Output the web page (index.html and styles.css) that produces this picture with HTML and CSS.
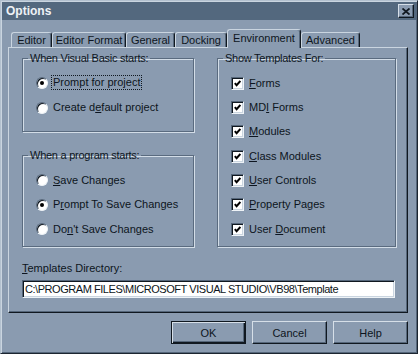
FILE: index.html
```html
<!DOCTYPE html>
<html lang="en">
<head>
<meta charset="utf-8">
<title>Options</title>
<link rel="stylesheet" href="styles.css">
</head>
<body>
<div class="window">
  <div class="titlebar">
    <span class="title">Options</span>
    <button class="close" aria-label="Close">
      <svg width="8" height="7" viewBox="0 0 8 7"><path d="M0.5 0.5 L7.5 6.5 M7.5 0.5 L0.5 6.5" stroke="#101820" stroke-width="1.8" fill="none"/></svg>
    </button>
  </div>
  <div class="client">
    <div class="tabs">
      <div class="tab t-editor">Editor</div>
      <div class="tab t-format">Editor Format</div>
      <div class="tab t-general">General</div>
      <div class="tab t-docking">Docking</div>
      <div class="tab t-env sel">Environment</div>
      <div class="tab t-adv">Advanced</div>
    </div>
    <div class="panel">
      <div class="groups">
        <div class="col">
          <fieldset class="grp g1">
            <legend>When Visual Basic starts:</legend>
            <div class="rows">
              <div class="opt"><span class="radio on"></span><span class="lbl focus">Prompt for pro<u>j</u>ect</span></div>
              <div class="opt"><span class="radio"></span><span class="lbl">Create d<u>e</u>fault project</span></div>
            </div>
          </fieldset>
          <fieldset class="grp g2">
            <legend>When a program starts:</legend>
            <div class="rows">
              <div class="opt"><span class="radio"></span><span class="lbl"><u>S</u>ave Changes</span></div>
              <div class="opt"><span class="radio on"></span><span class="lbl">P<u>r</u>ompt To Save Changes</span></div>
              <div class="opt"><span class="radio"></span><span class="lbl">Do<u>n</u>'t Save Changes</span></div>
            </div>
          </fieldset>
        </div>
        <fieldset class="grp g3">
          <legend>Show Templates For:</legend>
          <div class="rows">
            <div class="opt"><span class="check"><svg width="7" height="7" viewBox="0 0 7 7"><polyline points="0.8,3.2 2.6,5.2 6.4,1" fill="none" stroke="#000" stroke-width="2"/></svg></span><span class="lbl"><u>F</u>orms</span></div>
            <div class="opt"><span class="check"><svg width="7" height="7" viewBox="0 0 7 7"><polyline points="0.8,3.2 2.6,5.2 6.4,1" fill="none" stroke="#000" stroke-width="2"/></svg></span><span class="lbl">MD<u>I</u> Forms</span></div>
            <div class="opt"><span class="check"><svg width="7" height="7" viewBox="0 0 7 7"><polyline points="0.8,3.2 2.6,5.2 6.4,1" fill="none" stroke="#000" stroke-width="2"/></svg></span><span class="lbl"><u>M</u>odules</span></div>
            <div class="opt"><span class="check"><svg width="7" height="7" viewBox="0 0 7 7"><polyline points="0.8,3.2 2.6,5.2 6.4,1" fill="none" stroke="#000" stroke-width="2"/></svg></span><span class="lbl"><u>C</u>lass Modules</span></div>
            <div class="opt"><span class="check"><svg width="7" height="7" viewBox="0 0 7 7"><polyline points="0.8,3.2 2.6,5.2 6.4,1" fill="none" stroke="#000" stroke-width="2"/></svg></span><span class="lbl"><u>U</u>ser Controls</span></div>
            <div class="opt"><span class="check"><svg width="7" height="7" viewBox="0 0 7 7"><polyline points="0.8,3.2 2.6,5.2 6.4,1" fill="none" stroke="#000" stroke-width="2"/></svg></span><span class="lbl"><u>P</u>roperty Pages</span></div>
            <div class="opt"><span class="check"><svg width="7" height="7" viewBox="0 0 7 7"><polyline points="0.8,3.2 2.6,5.2 6.4,1" fill="none" stroke="#000" stroke-width="2"/></svg></span><span class="lbl">User <u>D</u>ocument</span></div>
          </div>
        </fieldset>
      </div>
      <div class="dirlabel"><u>T</u>emplates Directory:</div>
      <div class="textbox">C:\PROGRAM FILES\MICROSOFT VISUAL STUDIO\VB98\Template</div>
    </div>
    <div class="buttons">
      <button class="btn default">OK</button>
      <button class="btn">Cancel</button>
      <button class="btn">Help</button>
    </div>
  </div>
</div>
</body>
</html>
```
FILE: styles.css
```css
* { box-sizing: border-box; }
html, body { margin: 0; padding: 0; }
body {
  width: 418px;
  height: 354px;
  overflow: hidden;
  background: #8a9bb0;
  font-family: "Liberation Sans", Arial, sans-serif;
  font-size: 11px;
  color: #0d1520;
}
u { text-decoration: underline; text-underline-offset: 1px; }

.window {
  width: 418px;
  height: 354px;
  border: 1px solid;
  border-color: #b3c1cf #1c2530 #1c2530 #b3c1cf;
  box-shadow: inset 1px 1px 0 #cad5e0, inset -1px -1px 0 #55667a;
  padding: 1px;
  display: flex;
  flex-direction: column;
}

.titlebar {
  height: 18px;
  background: #53687e;
  display: flex;
  align-items: center;
  justify-content: space-between;
  padding: 0 2px 0 4px;
}
.title {
  color: #eef2f6;
  font-weight: bold;
  font-size: 12px;
}
.close {
  width: 16px;
  height: 14px;
  padding: 0;
  margin: 0;
  background: #8a9bb0;
  border: 1px solid;
  border-color: #d6dfe8 #101820 #101820 #d6dfe8;
  box-shadow: inset -1px -1px 0 #55667a;
  display: flex;
  align-items: center;
  justify-content: center;
}

.client {
  padding: 9px 8px 0 6px;
  display: flex;
  flex-direction: column;
}

.tabs {
  display: flex;
  align-items: flex-end;
  height: 18px;
  padding-left: 3px;
  position: relative;
  z-index: 1;
}
.tab {
  height: 15px;
  border: 1px solid;
  border-color: #cad5e0 #101820 transparent #cad5e0;
  border-bottom: none;
  border-radius: 3px 3px 0 0;
  box-shadow: inset -1px 0 0 #55667a;
  display: flex;
  align-items: center;
  justify-content: center;
  white-space: nowrap;
  background: #8a9bb0;
}
.tab.sel {
  height: 19px;
  margin-bottom: -1px;
  padding-bottom: 2px;
}
.t-editor { width: 41px; }
.t-format { width: 74px; }
.t-general { width: 49px; }
.t-docking { width: 52px; }
.t-env { width: 74px; }
.t-adv { width: 59px; }

.panel {
  height: 266px;
  border: 1px solid;
  border-color: #cad5e0 #101820 #101820 #cad5e0;
  box-shadow: inset -1px -1px 0 #55667a;
  padding: 3px 11px 0 13px;
}

.groups {
  display: flex;
  gap: 23px;
  align-items: stretch;
}
.col {
  display: flex;
  flex-direction: column;
  gap: 16px;
  width: 172px;
}
.grp {
  margin: 0;
  padding: 0;
  min-width: 0;
  border: 1px solid #5a6b7f;
  box-shadow: inset 1px 1px 0 #d3dde7, 1px 1px 0 #d3dde7;
}
.g3 { width: 179px; }
legend {
  margin-left: 5px;
  padding: 0 2px;
  line-height: 14px;
  letter-spacing: -0.25px;
}
.rows {
  padding-left: 13px;
  display: flex;
  flex-direction: column;
}
.g1 .rows { padding-top: 5px; padding-bottom: 11px; }
.g1 .opt { height: 25px; }
.g2 .rows { padding-top: 6px; padding-bottom: 4px; }
.g2 .opt { height: 24.5px; }
.g3 .rows { padding-top: 6px; }
.g3 .opt { height: 24.35px; }

.opt {
  display: flex;
  align-items: center;
  white-space: nowrap;
}
.lbl {
  padding: 0 1px;
  border: 1px dotted transparent;
  line-height: 13px;
}
.lbl.focus { border-color: #101820; }

.radio {
  width: 12px;
  height: 12px;
  border-radius: 50%;
  background: #fff;
  border: 1px solid;
  border-color: #55667a #eef3f7 #eef3f7 #55667a;
  box-shadow: inset 1px 1px 0 #101820;
  margin-right: 3px;
  display: flex;
  align-items: center;
  justify-content: center;
  flex: none;
}
.radio.on::after {
  content: "";
  width: 4px;
  height: 4px;
  border-radius: 50%;
  background: #000;
}

.check {
  width: 13px;
  height: 13px;
  background: #fff;
  border: 1px solid;
  border-color: #55667a #eef3f7 #eef3f7 #55667a;
  box-shadow: inset 1px 1px 0 #101820, inset -1px -1px 0 #cad5e0;
  margin-right: 3px;
  display: flex;
  align-items: center;
  justify-content: center;
  flex: none;
}

.dirlabel {
  margin-top: 15px;
  line-height: 13px;
}
.textbox {
  margin-top: 5px;
  width: 373px;
  height: 18px;
  background: #fff;
  border: 1px solid;
  border-color: #55667a #eef3f7 #eef3f7 #55667a;
  box-shadow: inset 1px 1px 0 #101820, inset -1px -1px 0 #cad5e0;
  padding: 0 2px;
  line-height: 16px;
  white-space: nowrap;
  letter-spacing: -0.45px;
}

.buttons {
  display: flex;
  justify-content: flex-end;
  gap: 6px;
  margin-top: 8px;
}
.btn {
  width: 75px;
  height: 23px;
  margin: 0;
  padding: 0;
  font: inherit;
  color: inherit;
  background: #8a9bb0;
  border: 1px solid;
  border-color: #d6dfe8 #101820 #101820 #d6dfe8;
  box-shadow: inset -1px -1px 0 #55667a;
}
.btn.default {
  border: 1px solid #101820;
  box-shadow: inset 1px 1px 0 #d6dfe8, inset -1px -1px 0 #101820, inset -2px -2px 0 #55667a;
}
```
